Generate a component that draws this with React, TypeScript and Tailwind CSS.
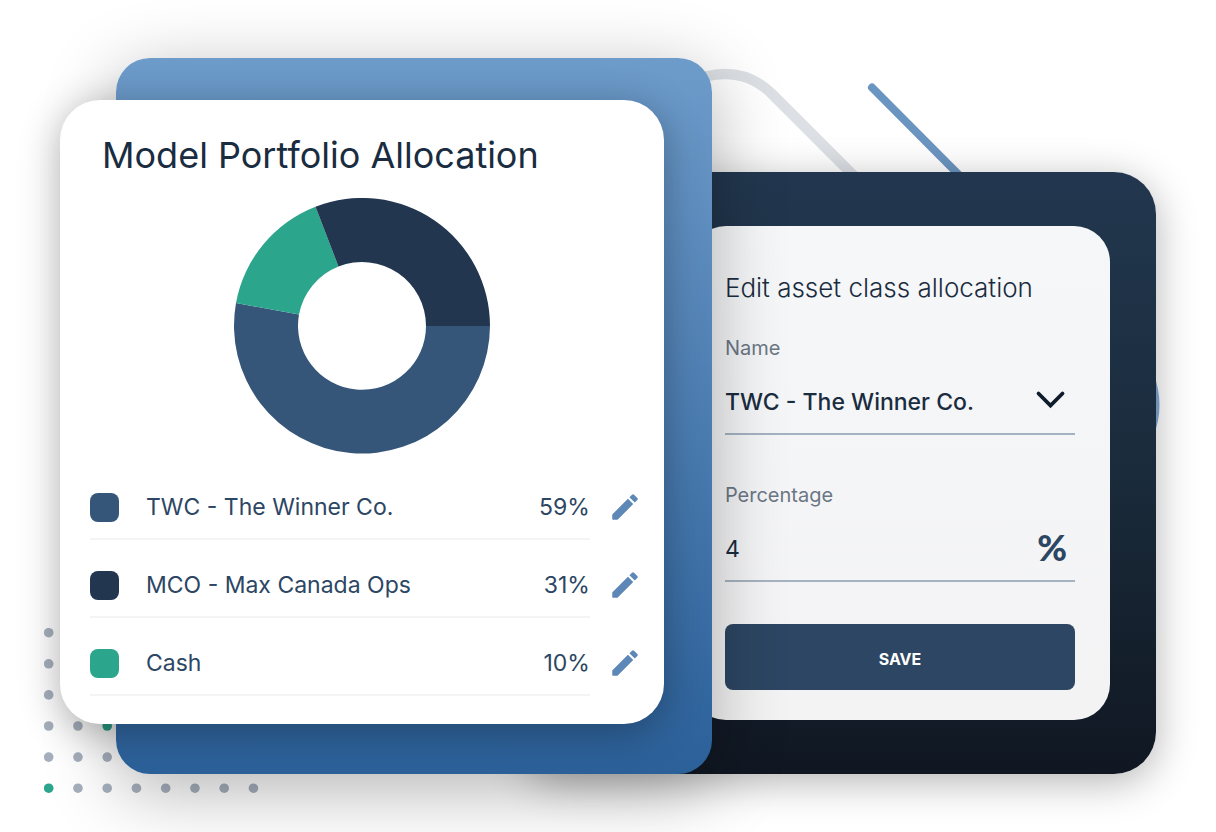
import { useState } from 'react';

const holdings = [
  { name: 'TWC - The Winner Co.', percent: '59%', swatch: 'bg-[#365679]' },
  { name: 'MCO - Max Canada Ops', percent: '31%', swatch: 'bg-[#223650]' },
  { name: 'Cash', percent: '10%', swatch: 'bg-[#2ba58b]' },
];

// dots still showing around the bottom left corner of the card, as [column, row]
const dots = [
  [0, 0], [0, 1], [0, 2],
  [0, 3], [1, 3], [2, 3],
  [0, 4], [1, 4], [2, 4],
  [0, 5], [1, 5], [2, 5], [3, 5], [4, 5], [5, 5], [6, 5], [7, 5],
];

function DotGrid() {
  return (
    <svg className="absolute left-11 top-[628px]" width="216" height="168" aria-hidden="true">
      {dots.map(([col, row]) => (
        <circle
          key={`${col}-${row}`}
          cx={4.7 + col * 29.25}
          cy={4.7 + row * 31.1}
          r="4.8"
          fill={(col === 2 && row === 3) || (col === 0 && row === 5) ? '#2ba58b' : '#a6b0bd'}
        />
      ))}
    </svg>
  );
}

function BackgroundLines() {
  return (
    <svg className="absolute right-12 top-[60px]" width="488" height="440" viewBox="680 60 488 440" fill="none" aria-hidden="true">
      <path d="M686 84C700 77 712 74 725 74C744 74 759 81 772 94L859 181" stroke="#dce0e4" strokeWidth="10.5" />
      <path d="M872 87.500L965 181" stroke="#6b95c1" strokeWidth="8" strokeLinecap="round" />
      <circle cx="1076" cy="405" r="83.5" fill="#85abd6" />
    </svg>
  );
}

function Donut() {
  return (
    <svg className="mx-auto block" width="256" height="256" viewBox="-128 -128 256 256" role="img" aria-label="Portfolio allocation chart">
      <path d="M128 0A128 128 0 1 1 -126 -23L-63 -11.5A64 64 0 1 0 64 0Z" fill="#365679" />
      <path d="M-126 -23A128 128 0 0 1 -46.500 -119.300L-23.500 -59.500A64 64 0 0 0 -63 -11.500Z" fill="#2ba58b" />
      <path d="M-46.500 -119.300A128 128 0 0 1 128 0L64 0A64 64 0 0 0 -23.500 -59.500Z" fill="#223650" />
    </svg>
  );
}

function PencilIcon() {
  return (
    <svg width="34" height="34" viewBox="0 0 24 24" fill="currentColor" aria-hidden="true">
      <path d="M3 17.46v3.04c0 .28.22.5.5.5h3.04c.13 0 .26-.05.35-.15L17.81 9.94l-3.75-3.75L3.15 17.1c-.1.1-.15.22-.15.36zM20.71 7.04a.996.996 0 0 0 0-1.41l-2.34-2.34a.996.996 0 0 0-1.41 0l-1.83 1.83 3.75 3.75 1.83-1.83z" />
    </svg>
  );
}

function AllocationCard() {
  return (
    <div className="rounded-[40px] bg-white px-[30px] pt-8 pb-7 shadow-[0_8px_40px_rgba(0,0,0,0.3)]">
      <h1 className="ml-3 text-[36px] leading-[46px] font-normal text-[#1a2c3f]">Model Portfolio Allocation</h1>
      <div className="mt-5">
        <Donut />
      </div>
      <ul className="-mr-2 mt-2">
        {holdings.map((holding) => (
          <li key={holding.name} className="flex h-[78px] items-stretch gap-[18px] text-[23px] text-[#2c4663]">
            <div className="flex flex-1 items-center border-b-2 border-[#f3f4f5] pt-[14px]">
              <span className={`mr-[27px] size-[29px] rounded-lg ${holding.swatch}`} />
              <span className="flex-1">{holding.name}</span>
              <span>{holding.percent}</span>
            </div>
            <button type="button" aria-label={`Edit ${holding.name}`} className="pt-3 text-[#5c87b6]">
              <PencilIcon />
            </button>
          </li>
        ))}
      </ul>
    </div>
  );
}

function EditForm() {
  const [name, setName] = useState(holdings[0].name);
  const [percentage, setPercentage] = useState('4');

  return (
    <form
      onSubmit={(e) => e.preventDefault()}
      className="rounded-[36px] bg-linear-to-b from-[#f6f7f9] to-[#f3f3f4] px-[35px] pt-[42px] pb-[30px] text-[#1a2c3f]"
    >
      <h2 className="text-[26px] leading-10 font-light">Edit asset class allocation</h2>

      <label htmlFor="name" className="mt-7 block text-xl leading-6 text-[#6b7785]">Name</label>
      <div className="mt-[7px] flex h-[68px] items-center border-b-2 border-[#a5b2c1]">
        <select
          id="name"
          value={name}
          onChange={(e) => setName(e.target.value)}
          className="h-full min-w-0 flex-1 appearance-none bg-transparent pt-1 text-[23px] font-medium outline-none"
        >
          {holdings.map((holding) => (
            <option key={holding.name}>{holding.name}</option>
          ))}
        </select>
        <svg className="pointer-events-none mr-2" width="32" height="24" viewBox="0 0 32 24" fill="none" aria-hidden="true">
          <path d="M3.500 5.500L15.500 17.500L27.500 5.500" stroke="#0f1c2b" strokeWidth="3.800" strokeLinecap="round" strokeLinejoin="miter" />
        </svg>
      </div>

      <label htmlFor="percentage" className="mt-12 block text-xl leading-6 text-[#6b7785]">Percentage</label>
      <div className="mt-[7px] flex h-[68px] items-center border-b-2 border-[#a5b2c1]">
        <input
          id="percentage"
          type="text"
          value={percentage}
          onChange={(e) => setPercentage(e.target.value)}
          className="h-full min-w-0 flex-1 bg-transparent pt-1 text-[23px] outline-none"
        />
        <span className="mr-2 font-[Lato] text-[36px] font-black text-[#2c4663]">%</span>
      </div>

      <button type="submit" className="mt-[42px] h-[66px] w-full rounded-lg bg-[#2c4663] pt-1 font-bold text-white">
        SAVE
      </button>
    </form>
  );
}

export default function App() {
  return (
    <main className="relative min-h-screen overflow-hidden bg-white pt-[58px] pr-[60px] pb-[58px] pl-[116px] font-[Inter,sans-serif]">
      <DotGrid />
      <BackgroundLines />
      <div className="relative flex items-end">
        <section className="z-10 w-[57.3%] shrink-0 rounded-[34px] bg-linear-to-b from-[#6d9bca] to-[#2b6099] pt-[42px] pr-12 pb-[50px] shadow-[0_16px_72px_rgba(0,0,0,0.3)]">
          <div className="-ml-14">
            <AllocationCard />
          </div>
        </section>
        <section className="-ml-48 min-w-0 flex-1 rounded-[42px] bg-linear-to-b from-[#22374f] via-[#1a2b3b] to-[#101722] py-[54px] pr-[46px] pl-[170px] shadow-[0_8px_40px_rgba(0,0,0,0.3)]">
          <EditForm />
        </section>
      </div>
    </main>
  );
}
